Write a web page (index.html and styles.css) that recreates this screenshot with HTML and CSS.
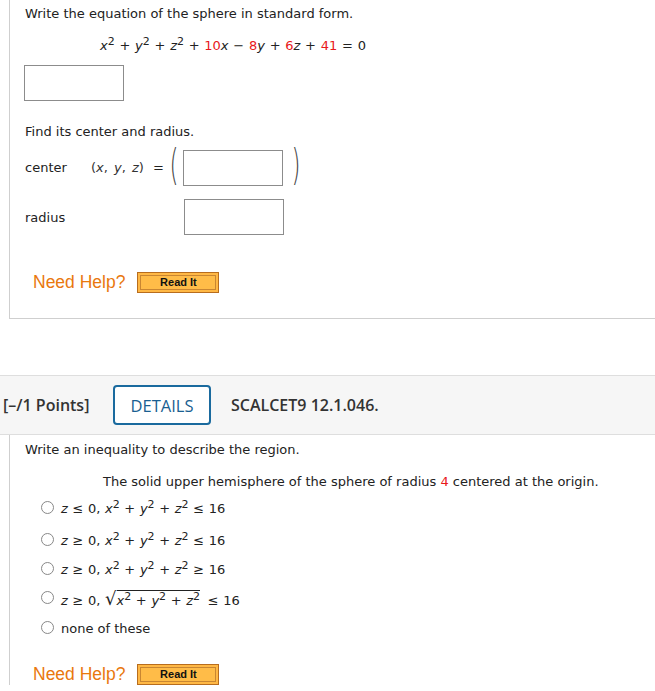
FILE: index.html
```html
<!DOCTYPE html>
<html>
<head>
<meta charset="utf-8">
<link rel="stylesheet" href="styles.css">
</head>
<body>
<div class="q q1">
  <p class="line l1">Write the equation of the sphere in standard form.</p>
  <p class="line eq"><i>x</i><sup>2</sup> + <i>y</i><sup>2</sup> + <i>z</i><sup>2</sup> + <span class="red">10</span><i>x</i> &minus; <span class="red">8</span><i>y</i> + <span class="red">6</span><i>z</i> + <span class="red">41</span> = 0</p>
  <div class="box big"></div>
  <p class="line find">Find its center and radius.</p>
  <div class="row center">
    <span class="lbl">center</span>
    <span class="xyz">(<i>x</i>, <i>y</i>, <i>z</i>)</span>
    <span class="eqs">=</span>
    <span class="paren">(</span>
    <div class="box"></div>
    <span class="paren rp">)</span>
  </div>
  <div class="row radius">
    <span class="lbl">radius</span>
    <div class="box"></div>
  </div>
  <div class="help">
    <span class="need">Need Help?</span>
    <span class="readit"><span class="ri">Read It</span></span>
  </div>
</div>

<div class="band">
  <span class="pts">[&ndash;/1 Points]</span>
  <span class="details">DETAILS</span>
  <span class="code">SCALCET9 12.1.046.</span>
</div>

<div class="q q2">
  <p class="line ineq">Write an inequality to describe the region.</p>
  <p class="line solid">The solid upper hemisphere of the sphere of radius <span class="red">4</span> centered at the origin.</p>
  <ul class="opts">
    <li><span class="radio"></span><span class="math"><i>z</i> &le; 0, <i>x</i><sup>2</sup> + <i>y</i><sup>2</sup> + <i>z</i><sup>2</sup> &le; 16</span></li>
    <li class="o2"><span class="radio"></span><span class="math"><i>z</i> &ge; 0, <i>x</i><sup>2</sup> + <i>y</i><sup>2</sup> + <i>z</i><sup>2</sup> &le; 16</span></li>
    <li><span class="radio"></span><span class="math"><i>z</i> &ge; 0, <i>x</i><sup>2</sup> + <i>y</i><sup>2</sup> + <i>z</i><sup>2</sup> &ge; 16</span></li>
    <li><span class="radio"></span><span class="math"><i>z</i> &ge; 0, <span class="sqrt">&radic;</span><span class="rad"><i>x</i><sup>2</sup> + <i>y</i><sup>2</sup> + <i>z</i><sup>2</sup></span> &le; 16</span></li>
    <li class="none"><span class="radio"></span><span>none of these</span></li>
  </ul>
  <div class="help h2">
    <span class="need">Need Help?</span>
    <span class="readit"><span class="ri">Read It</span></span>
  </div>
</div>
</body>
</html>
```
FILE: styles.css
```css
html, body {
  margin: 0;
  padding: 0;
  background: #fff;
}
body {
  font-family: "DejaVu Sans", Verdana, sans-serif;
  font-size: 13px;
  color: #222;
}
.q {
  margin-left: 9px;
  border-left: 1px solid #cfcfcf;
  padding-left: 15px;
}
.q1 {
  border-bottom: 1px solid #cfcfcf;
  padding-top: 6px;
  padding-bottom: 25px;
}
.line {
  margin: 0;
  line-height: 16px;
}
.math {
  word-spacing: 0.5px;
}
i {
  font-style: italic;
}
sup {
  font-size: 11px;
  line-height: 0;
  vertical-align: 5px;
}
.red {
  color: #e8181b;
}
.eq {
  margin-top: 16px;
  padding-left: 75px;
  word-spacing: 0.6px;
}
.box {
  width: 98px;
  height: 34px;
  border: 1px solid #8c8c8c;
  background: #fff;
}
.big {
  margin-top: 11px;
  margin-left: -1px;
}
.find {
  margin-top: 23px;
}
.row {
  display: flex;
  align-items: center;
}
.center {
  margin-top: 6px;
  height: 43px;
}
.lbl {
  width: 66px;
}
.xyz {
  width: 62px;
  color: #333;
  word-spacing: 2px;
}
.eqs {
  width: 12px;
}
.paren {
  font-family: "DejaVu Sans", sans-serif;
  font-size: 42px;
  font-weight: 200;
  line-height: 40px;
  transform: scaleX(0.55);
  color: #444;
  width: 18px;
  text-align: center;
  margin-top: -4px;
}
.rp {
  margin-left: 4px;
}
.radius {
  margin-top: 10px;
}
.radius .box {
  margin-left: 93px;
}
.help {
  display: flex;
  align-items: center;
  margin-top: 37px;
  padding-left: 8px;
}
.need {
  font-family: "Liberation Sans", Arial, sans-serif;
  font-size: 17.5px;
  color: #e9780e;
  margin-right: 12px;
}
.readit {
  display: inline-block;
  border: 1px solid #b86d1e;
  background: #ffb845;
  padding: 2px;
}
.ri {
  display: block;
  width: 74px;
  height: 13px;
  border: 1px solid #c98632;
  background: #ffbc48;
  font-family: "Liberation Sans", Arial, sans-serif;
  font-weight: bold;
  font-size: 11px;
  line-height: 13px;
  text-align: center;
  color: #111;
}
.band {
  margin-top: 56px;
  height: 58px;
  background: #f6f6f6;
  border-top: 1px solid #dedede;
  border-bottom: 1px solid #dedede;
  display: flex;
  align-items: center;
  font-family: "Open Sans", sans-serif;
  font-weight: 600;
  font-size: 16px;
  color: #333;
}
.pts {
  margin-left: 3px;
  width: 110px;
}
.details {
  box-sizing: border-box;
  width: 98px;
  height: 40px;
  border: 2px solid #1a6a9e;
  border-radius: 4px;
  display: flex;
  align-items: center;
  justify-content: center;
  color: #1a5f91;
  font-weight: 500;
  background: #fff;
  font-size: 16.5px;
}
.code {
  margin-left: 20px;
}
.q2 {
  padding-top: 7px;
}
.solid {
  margin-top: 16px;
  padding-left: 78px;
}
.opts {
  list-style: none;
  margin: 4px 0 0 16px;
  padding: 0;
}
.opts li {
  display: flex;
  align-items: center;
  height: 29px;
}
.opts li.o2 {
  margin-top: 3px;
}
.opts li.none {
  margin-top: 1px;
}
.radio {
  box-sizing: border-box;
  width: 13px;
  height: 13px;
  border: 1px solid #888;
  border-radius: 50%;
  margin-right: 7px;
  margin-top: -2px;
}
.sqrt {
  font-size: 18px;
  margin-right: 0;
}
.rad {
  display: inline-block;
  line-height: 15px;
  border-top: 1px solid #222;
  padding-top: 2px;
  margin-right: 3px;
}
.h2 {
  margin-top: 21px;
}
```
